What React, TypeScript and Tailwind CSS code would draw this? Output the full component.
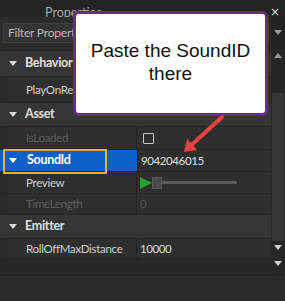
import React from "react";

const Tri = ({ color = "#d8d8d8" }: { color?: string }) => (
  <svg width="8" height="6" viewBox="0 0 8 6" className="shrink-0">
    <polygon points="0,0 8,0 4,5" fill={color} />
  </svg>
);

function Header({ label, h }: { label: string; h: string }) {
  return (
    <div className={`flex items-center ${h} bg-[#353535] border-b border-[#262626]`}>
      <div className="w-[25px] flex justify-center pl-[1px]">
        <Tri />
      </div>
      <span className="text-[12.5px] font-bold tracking-[-0.3px] text-[#e0e0e0]">{label}</span>
    </div>
  );
}

function Prop({
  label,
  h,
  dim,
  value,
}: {
  label: string;
  h: string;
  dim?: boolean;
  value?: React.ReactNode;
}) {
  return (
    <div className={`flex ${h} border-b border-[#262626]`}>
      <div className="w-[8px] bg-[#2a2a2a]" />
      <div className="w-[129px] flex items-center pl-[18px] bg-[#2e2e2e] border-r border-[#222]">
        <span className={`text-[11.5px] tracking-[-0.3px] ${dim ? "text-[#5e5e5e]" : "text-[#d0d0d0]"}`}>{label}</span>
      </div>
      <div className="flex-1 flex items-center pl-[3px] bg-[#2e2e2e]">{value}</div>
    </div>
  );
}

export default function App() {
  return (
    <div className="relative w-[285px] h-[301px] overflow-hidden bg-[#2b2b2b] font-['Lato',sans-serif]">
      {/* title bar */}
      <div className="flex h-[17px] bg-[#232323]">
        <div className="w-[270px] pl-[45px] pt-[7px] text-[12.5px] leading-[12px] text-[#a8a8a8] whitespace-nowrap">
          Properties
        </div>
        <div className="flex-1 flex justify-start pt-[6px] text-[#d8d8d8] text-[12px] leading-[12px] font-['DejaVu_Sans',sans-serif]">×</div>
      </div>

      <div className="flex">
        {/* content */}
        <div className="w-[271px] flex flex-col">
          <div className="h-[34px] flex items-start pt-[6px] pl-[3px] bg-[#2b2b2b] border-b border-[#262626]">
            <div className="w-[266px] h-[20px] bg-[#333] border border-[#3e3e3e] flex items-center pl-[4px]">
              <span className="text-[12px] tracking-[-0.2px] text-[#b8b8b8]">Filter Properties (Ctrl+Shift+P)</span>
            </div>
          </div>
          <Header label="Behavior" h="h-[26px]" />
          <Prop label="PlayOnRemove" h="h-[26px]" />
          <Header label="Asset" h="h-[24px]" />
          <Prop
            label="IsLoaded"
            h="h-[23px]"
            dim
            value={<div className="ml-[3px] w-[11px] h-[11px] border border-[#c8c8c8] rounded-[1px]" />}
          />
          {/* SoundId selected */}
          <div className="relative flex h-[22px] border-b border-[#262626]">
            <div className="w-[137px] flex items-center bg-[#0f5fc8]">
              <div className="w-[25px] flex justify-center pl-[1px]">
                <Tri color="#ffffff" />
              </div>
              <span className="text-[12.5px] font-bold tracking-[-0.3px] text-white pl-[2px]">SoundId</span>
            </div>
            <div className="flex-1 flex items-center pl-[3px] bg-[#2e2e2e] border-l border-[#222]">
              <span className="text-[11.5px] tracking-[-0.4px] text-[#e0e0e0]">9042046015</span>
            </div>
            <div className="absolute left-[3px] top-[-1px] w-[104px] h-[25px] border-2 border-[#f2a93b]" />
          </div>
          <Prop
            label="Preview"
            h="h-[22px]"
            value={
              <div className="flex items-center">
                <svg width="12" height="12" viewBox="0 0 12 12">
                  <polygon points="0,0 12,6 0,12" fill="#23a12d" />
                </svg>
                <div className="w-[10px] h-[12px] bg-[#4a4a4a] border border-[#5a5a5a]" />
                <div className="w-[75px] h-[3px] bg-[#5c5c5c] rounded-full" />
              </div>
            }
          />
          <Prop
            label="TimeLength"
            h="h-[21px]"
            dim
            value={<span className="text-[11.5px] text-[#555]">0</span>}
          />
          <Header label="Emitter" h="h-[24px]" />
          <Prop
            label="RollOffMaxDistance"
            h="h-[20px]"
            value={<span className="text-[11.5px] tracking-[-0.4px] text-[#dcdcdc]">10000</span>}
          />
          <div className="h-[17px] bg-[#262626] border-b border-[#202020]" />
        </div>
        {/* scrollbar */}
        <div className="w-[14px] flex flex-col bg-[#262626]">
          <div className="h-[32px] flex items-center justify-center bg-[#222]">
            <Tri color="#9a9a9a" />
          </div>
          <div className="h-[14px] flex items-center justify-center">
            <svg width="8" height="6" viewBox="0 0 8 6">
              <polygon points="0,5 8,5 4,0" fill="#9a9a9a" />
            </svg>
          </div>
          <div className="h-[30px] bg-[#252525]" />
          <div className="h-[148px] mx-[1px] bg-[#353535]" />
          <div className="h-[14px] flex items-center justify-center">
            <Tri color="#cfcfcf" />
          </div>
          <div className="h-[17px] flex items-center justify-center">
            <Tri color="#cfcfcf" />
          </div>
        </div>
      </div>

      {/* callout popup */}
      <div className="absolute left-[73px] top-[11px] w-[195px] h-[105px] pb-[4px] bg-white border-[3px] border-[#652d90] rounded-[6px] flex flex-col items-center justify-center font-['Liberation_Sans',Arial,sans-serif] text-[19px] leading-[23px] text-[#111]">
        <span>Paste the SoundID</span>
        <span>there</span>
      </div>

      {/* red arrow */}
      <svg className="absolute left-0 top-0" width="285" height="301" viewBox="0 0 285 301">
        <line x1="222" y1="117" x2="191" y2="145.5" stroke="#e8423f" strokeWidth="4" strokeLinecap="round" />
        <polygon points="184,152 197,150 187,139" fill="#e8423f" />
      </svg>
    </div>
  );
}
